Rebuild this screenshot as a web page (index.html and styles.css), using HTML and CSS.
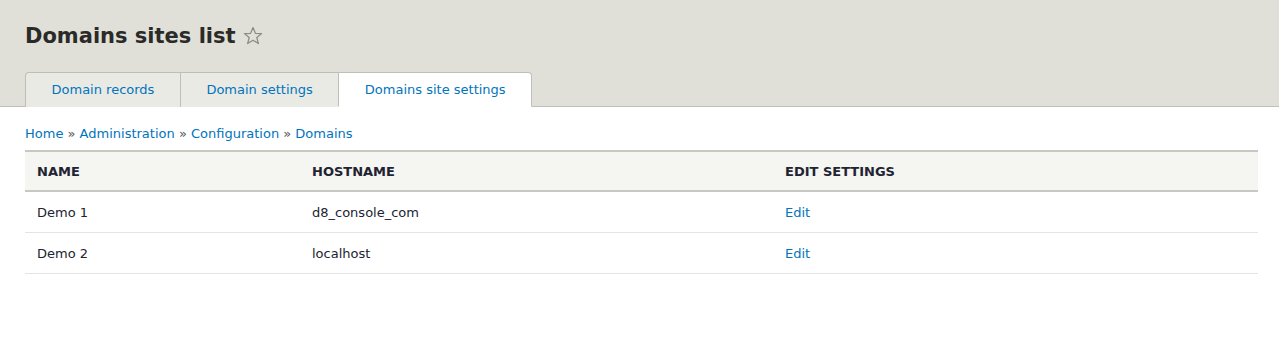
FILE: index.html
```html
<!DOCTYPE html>
<html lang="en">
<head>
  <meta charset="UTF-8">
  <title>Domains sites list</title>
  <link rel="stylesheet" href="styles.css">
</head>
<body>
  <header class="page-header">
    <h1 class="page-title">Domains sites list
      <svg class="star" width="20" height="20" viewBox="0 0 20 20">
        <path d="M10 1.5 L12.4 7.3 L18.6 7.6 L13.8 11.5 L15.4 17.6 L10 14.2 L4.6 17.6 L6.2 11.5 L1.4 7.6 L7.6 7.3 Z" fill="none" stroke="#8a8a86" stroke-width="1.2" stroke-linejoin="round"/>
      </svg>
    </h1>
    <ul class="tabs">
      <li><a href="#">Domain records</a></li>
      <li><a href="#">Domain settings</a></li>
      <li class="active"><a href="#">Domains site settings</a></li>
    </ul>
  </header>

  <main class="content">
    <nav class="breadcrumb">
      <a href="#">Home</a> » <a href="#">Administration</a> » <a href="#">Configuration</a> » <a href="#">Domains</a>
    </nav>

    <table class="sites">
      <thead>
        <tr>
          <th class="col-name">Name</th>
          <th class="col-host">Hostname</th>
          <th>Edit settings</th>
        </tr>
      </thead>
      <tbody>
        <tr>
          <td>Demo 1</td>
          <td>d8_console_com</td>
          <td><a href="#">Edit</a></td>
        </tr>
        <tr>
          <td>Demo 2</td>
          <td>localhost</td>
          <td><a href="#">Edit</a></td>
        </tr>
      </tbody>
    </table>
  </main>
</body>
</html>
```

FILE: styles.css
```css
body {
  margin: 0;
  font-family: "DejaVu Sans", sans-serif;
  font-size: 13px;
  color: #222330;
  background: #fff;
}
a {
  color: #0074bd;
  text-decoration: none;
}
.page-header {
  background: #e0e0d8;
  border-bottom: 1px solid #bfbfba;
  padding: 0 25px;
}
.page-title {
  margin: 0;
  padding-top: 23px;
  font-size: 21px;
  line-height: 26px;
  font-weight: bold;
  color: #2a2a28;
  display: flex;
  align-items: center;
  gap: 7px;
}
.star {
  display: block;
}
.tabs {
  list-style: none;
  margin: 23px 0 -1px;
  padding: 0;
  display: flex;
}
.tabs li {
  background: #eaeae5;
  border: 1px solid #bfbfba;
  border-bottom: none;
  border-right: none;
}
.tabs li:first-child {
  border-top-left-radius: 4px;
}
.tabs li:last-child {
  border-right: 1px solid #bfbfba;
  border-top-right-radius: 4px;
}
.tabs li.active {
  background: #fff;
  border-bottom: 1px solid #fff;
}
.tabs a {
  display: block;
  padding: 0 25.5px;
  line-height: 33px;
  height: 33px;
}
.content {
  padding: 0 21px 0 25px;
}
.breadcrumb {
  margin: 0;
  padding-top: 18px;
  line-height: 17px;
  color: #555;
}
.sites {
  width: 100%;
  margin-top: 8px;
  border-collapse: collapse;
}
.sites th {
  background: #f5f5f2;
  border-top: 2px solid #c8c8c3;
  border-bottom: 2px solid #c8c8c3;
  text-align: left;
  text-transform: uppercase;
  font-size: 13px;
  font-weight: bold;
  color: #222330;
  height: 38px;
  padding: 0 12px;
}
.sites td {
  border-bottom: 1px solid #e6e4df;
  height: 40px;
  padding: 0 12px;
}
.col-name {
  width: 251px;
}
.col-host {
  width: 449px;
}
```
